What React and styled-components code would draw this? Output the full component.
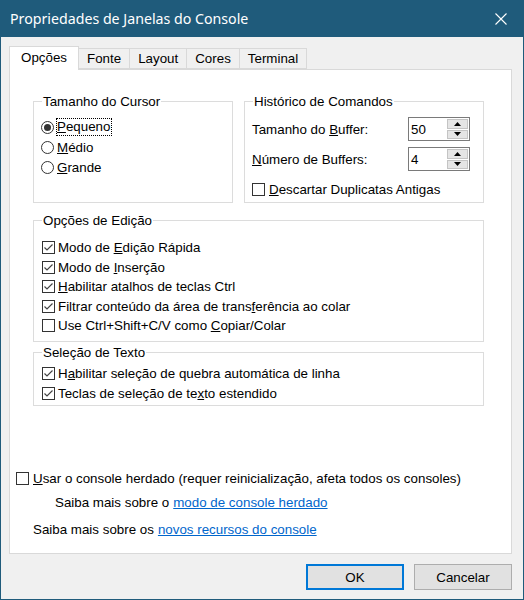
import React from "react";
import styled, { createGlobalStyle } from "styled-components";

const GlobalStyle = createGlobalStyle`
  html, body {
    margin: 0;
    padding: 0;
    background: #f0f0f0;
  }
  body {
    font-family: "Liberation Sans", Arial, sans-serif;
    font-size: 13.35px;
    color: #000;
  }
`;

const Window = styled.div`
  width: 524px;
  height: 600px;
  display: flex;
  flex-direction: column;
  background: #f0f0f0;
  box-sizing: border-box;
`;

const TitleBar = styled.div`
  height: 37px;
  flex: none;
  background: #1f5b7b;
  display: flex;
  align-items: center;
  justify-content: space-between;
  padding: 0 17px 0 10px;
`;

const Title = styled.div`
  font-family: "Noto Sans", "Open Sans", sans-serif;
  font-size: 14.2px;
  color: #fff;
  margin-top: -1px;
`;

const Body = styled.div`
  flex: 1;
  border: 1px solid #1f5b7b;
  border-top: none;
  padding: 9px 11px 0 8px;
  display: flex;
  flex-direction: column;
`;

const TabStrip = styled.div`
  display: flex;
  align-items: flex-end;
  height: 23px;
`;

const Tab = styled.div`
  box-sizing: border-box;
  height: ${(p) => (p.$active ? "24px" : "21px")};
  margin-bottom: ${(p) => (p.$active ? "-1px" : "0")};
  padding: 0 ${(p) => (p.$active ? "11px" : "8px")};
  border: 1px solid #d9d9d9;
  border-bottom: ${(p) => (p.$active ? "none" : "1px solid #d9d9d9")};
  background: ${(p) => (p.$active ? "#fff" : "#f0f0f0")};
  position: relative;
  z-index: ${(p) => (p.$active ? 2 : 1)};
  display: flex;
  align-items: center;
  padding-bottom: ${(p) => (p.$active ? "2px" : "0")};
  & + & {
    margin-left: -1px;
  }
`;

const Panel = styled.div`
  box-sizing: border-box;
  height: 485px;
  background: #fff;
  border: 1px solid #d9d9d9;
  padding: 24px 27px 0 6px;
  display: flex;
  flex-direction: column;
`;

const Groups = styled.div`
  margin-left: 17px;
  display: flex;
  flex-direction: column;
`;

const TopRow = styled.div`
  display: flex;
  gap: 11px;
  align-items: stretch;
`;

const Group = styled.fieldset`
  margin: ${(p) => p.$margin || "0"};
  padding: 0;
  border: 1px solid #dcdcdc;
  min-width: 0;
  width: ${(p) => p.$width || "auto"};
  flex: ${(p) => (p.$width ? "none" : "1")};
  box-sizing: border-box;
`;

const Legend = styled.legend`
  margin-left: 8px;
  padding: 0 1px;
  line-height: 15px;
`;

const GroupBody = styled.div`
  padding: ${(p) => p.$pad};
  display: flex;
  flex-direction: column;
`;

const OptionRow = styled.div`
  height: ${(p) => p.$h || "20px"};
  display: flex;
  align-items: center;
`;

const FieldRow = styled.div`
  height: 24px;
  display: flex;
  align-items: center;
  justify-content: space-between;
  margin-bottom: ${(p) => p.$mb || "0"};
`;

const Box = styled.span`
  box-sizing: border-box;
  width: 13px;
  height: 13px;
  border: 1px solid #333;
  background: #fff;
  flex: none;
  margin-right: ${(p) => p.$gap || "3px"};
  display: flex;
  align-items: center;
  justify-content: center;
`;

const Circle = styled.span`
  box-sizing: border-box;
  width: 13px;
  height: 13px;
  border: 1px solid #333;
  border-radius: 50%;
  background: #fff;
  flex: none;
  margin-right: 3px;
  display: flex;
  align-items: center;
  justify-content: center;
  &::after {
    content: "";
    width: 7px;
    height: 7px;
    border-radius: 50%;
    background: ${(p) => (p.$on ? "#333" : "transparent")};
  }
`;

const Focus = styled.span`
  outline: 1px dotted #000;
  outline-offset: 0;
  padding: 0 1px 1px 0;
`;

const SpinBox = styled.div`
  box-sizing: border-box;
  width: 62px;
  height: 24px;
  border: 1px solid #7a7a7a;
  background: #fff;
  display: flex;
`;

const SpinValue = styled.div`
  flex: 1;
  padding-left: 2px;
  display: flex;
  align-items: center;
`;

const SpinButtons = styled.div`
  width: 21px;
  margin: 1px;
  display: flex;
  flex-direction: column;
  gap: 1px;
`;

const SpinBtn = styled.div`
  flex: 1;
  box-sizing: border-box;
  background: #e5e5e5;
  border: 1px solid #c4c4c4;
  display: flex;
  align-items: center;
  justify-content: center;
`;

const Legacy = styled.div`
  margin-top: 63px;
  height: 20px;
  display: flex;
  align-items: center;
`;

const InfoLine = styled.div`
  height: 20px;
  display: flex;
  align-items: center;
  margin-top: ${(p) => p.$mt};
  padding-left: ${(p) => p.$indent};
`;

const Link = styled.a`
  color: #0066cc;
  text-decoration: underline;
  cursor: pointer;
  margin-left: 4px;
`;

const ButtonRow = styled.div`
  display: flex;
  justify-content: flex-end;
  gap: 10px;
  margin-top: 10px;
`;

const Button = styled.button`
  box-sizing: border-box;
  width: 98px;
  height: 26px;
  margin: 0;
  padding: 0;
  font-family: inherit;
  font-size: 13.35px;
  color: #000;
  background: #e1e1e1;
  border: ${(p) => (p.$default ? "2px solid #0078d7" : "1px solid #adadad")};
`;

function Check({ on, gap, children }) {
  return (
    <>
      <Box $gap={gap}>
        {on && (
          <svg width="11" height="11" viewBox="0 0 11 11">
            <polyline
              points="1.5,5.5 4,8 9.5,2.5"
              fill="none"
              stroke="#444"
              strokeWidth="1.2"
            />
          </svg>
        )}
      </Box>
      <span>{children}</span>
    </>
  );
}

function Arrow({ down }) {
  return (
    <svg width="7" height="4" viewBox="0 0 7 4">
      <polygon points={down ? "0,0 7,0 3.5,4" : "0,4 7,4 3.5,0"} fill="#000" />
    </svg>
  );
}

function Spin({ value }) {
  return (
    <SpinBox>
      <SpinValue>{value}</SpinValue>
      <SpinButtons>
        <SpinBtn>
          <Arrow />
        </SpinBtn>
        <SpinBtn>
          <Arrow down />
        </SpinBtn>
      </SpinButtons>
    </SpinBox>
  );
}

export default function App() {
  return (
    <>
      <GlobalStyle />
      <Window>
        <TitleBar>
          <Title>Propriedades de Janelas do Console</Title>
          <svg width="12" height="12" viewBox="0 0 12 12">
            <path d="M0.5,0.5 L11.5,11.5 M11.5,0.5 L0.5,11.5" stroke="#fff" strokeWidth="1.1" />
          </svg>
        </TitleBar>
        <Body>
          <TabStrip>
            <Tab $active>Opções</Tab>
            <Tab>Fonte</Tab>
            <Tab>Layout</Tab>
            <Tab>Cores</Tab>
            <Tab>Terminal</Tab>
          </TabStrip>
          <Panel>
            <Groups>
              <TopRow>
                <Group $width="200px">
                  <Legend>Tamanho do Cursor</Legend>
                  <GroupBody $pad="8px 0 0 7px">
                    <OptionRow>
                      <Circle $on />
                      <Focus>
                        <u>P</u>equeno
                      </Focus>
                    </OptionRow>
                    <OptionRow>
                      <Circle />
                      <span>
                        <u>M</u>édio
                      </span>
                    </OptionRow>
                    <OptionRow>
                      <Circle />
                      <span>
                        <u>G</u>rande
                      </span>
                    </OptionRow>
                  </GroupBody>
                </Group>
                <Group>
                  <Legend>Histórico de Comandos</Legend>
                  <GroupBody $pad="8px 13px 3px 7px">
                    <FieldRow $mb="6px">
                      <span>
                        Tamanho do <u>B</u>uffer:
                      </span>
                      <Spin value="50" />
                    </FieldRow>
                    <FieldRow $mb="8px">
                      <span>
                        <u>N</u>úmero de Buffers:
                      </span>
                      <Spin value="4" />
                    </FieldRow>
                    <OptionRow>
                      <Check gap="4px">
                        <u>D</u>escartar Duplicatas Antigas
                      </Check>
                    </OptionRow>
                  </GroupBody>
                </Group>
              </TopRow>

              <Group $margin="10px 0 0 0">
                <Legend>Opções de Edição</Legend>
                <GroupBody $pad="10px 0 5px 8px">
                  <OptionRow $h="19.5px">
                    <Check on>
                      Modo de <u>E</u>dição Rápida
                    </Check>
                  </OptionRow>
                  <OptionRow $h="19.5px">
                    <Check on>
                      Modo de <u>I</u>nserção
                    </Check>
                  </OptionRow>
                  <OptionRow $h="19.5px">
                    <Check on>
                      <u>H</u>abilitar atalhos de teclas Ctrl
                    </Check>
                  </OptionRow>
                  <OptionRow $h="19.5px">
                    <Check on>
                      Filtrar conteúdo da área de trans<u>f</u>erência ao colar
                    </Check>
                  </OptionRow>
                  <OptionRow $h="19.5px">
                    <Check>
                      Use Ctrl+Shift+C/V como <u>C</u>opiar/Colar
                    </Check>
                  </OptionRow>
                </GroupBody>
              </Group>

              <Group $margin="3px 0 0 0">
                <Legend>Seleção de Texto</Legend>
                <GroupBody $pad="4px 0 1px 8px">
                  <OptionRow>
                    <Check on>
                      H<u>a</u>bilitar seleção de quebra automática de linha
                    </Check>
                  </OptionRow>
                  <OptionRow>
                    <Check on>
                      Teclas de seleção de te<u>x</u>to estendido
                    </Check>
                  </OptionRow>
                </GroupBody>
              </Group>
            </Groups>

            <Legacy>
              <Check gap="4px">
                <u>U</u>sar o console herdado (requer reinicialização, afeta todos os consoles)
              </Check>
            </Legacy>
            <InfoLine $mt="4px" $indent="39px">
              Saiba mais sobre o<Link>modo de console herdado</Link>
            </InfoLine>
            <InfoLine $mt="7px" $indent="17px">
              Saiba mais sobre os<Link>novos recursos do console</Link>
            </InfoLine>
          </Panel>
          <ButtonRow>
            <Button $default>OK</Button>
            <Button>Cancelar</Button>
          </ButtonRow>
        </Body>
      </Window>
    </>
  );
}
